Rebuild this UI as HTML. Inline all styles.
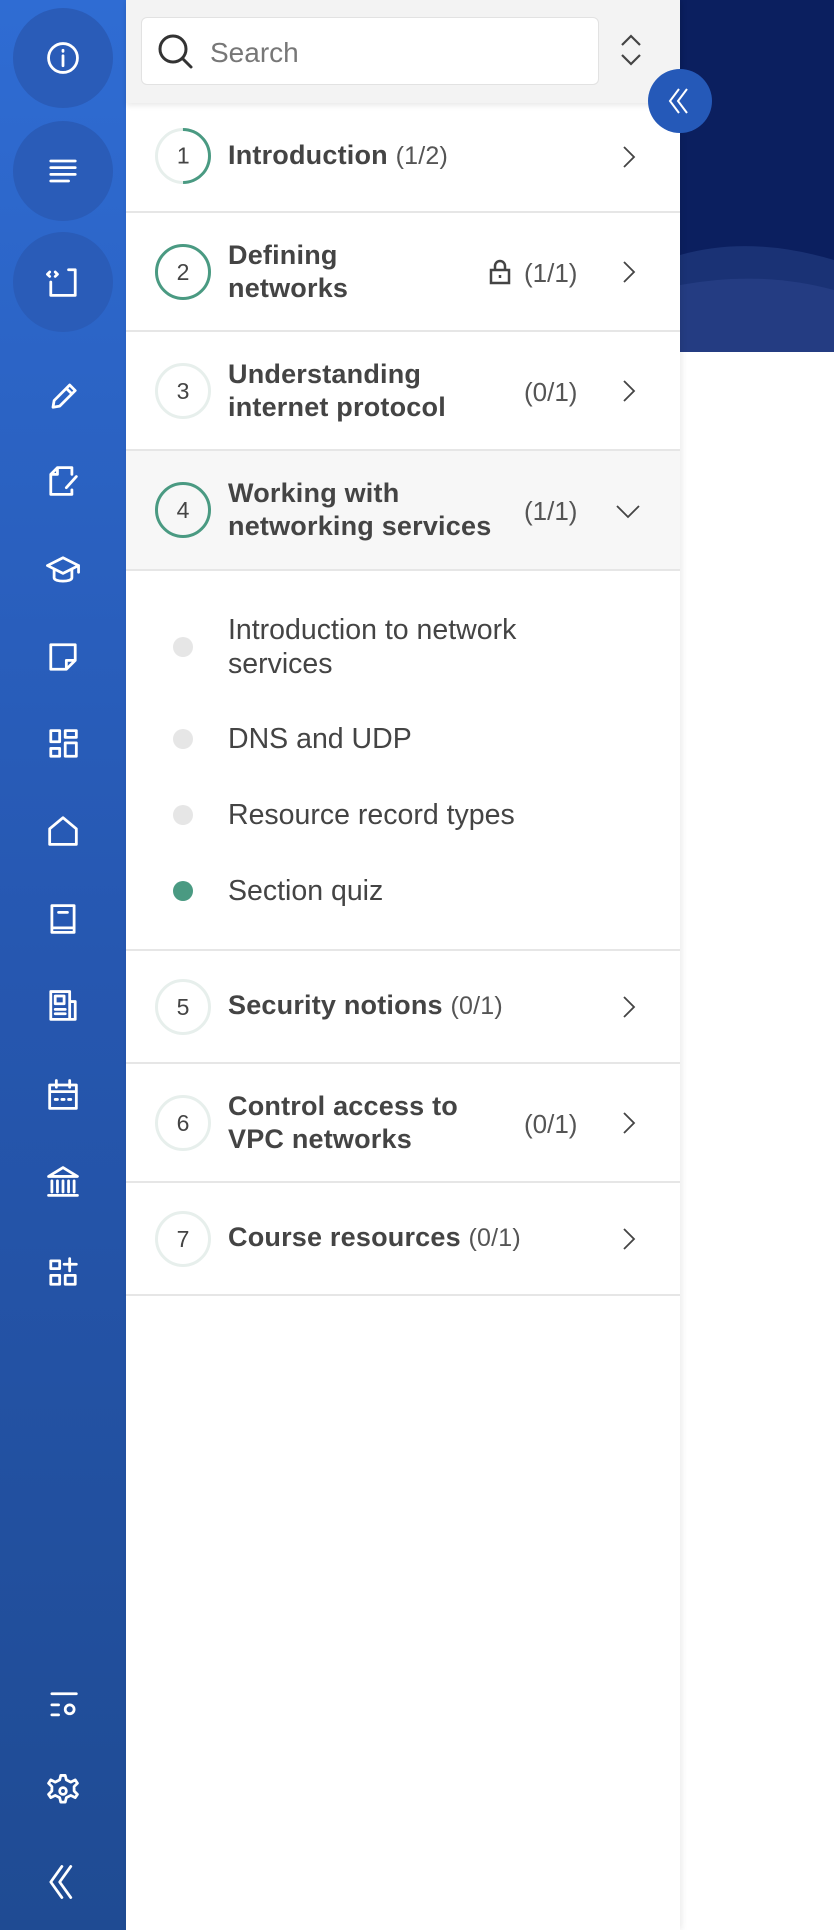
<!DOCTYPE html>
<html><head><meta charset="utf-8"><style>
*{box-sizing:border-box;margin:0;padding:0}
body{width:834px;height:1930px;position:relative;overflow:hidden;background:#fff;font-family:"Liberation Sans",Roboto,sans-serif;color:#3c3c3c}
#side{position:absolute;left:0;top:0;width:126px;height:1930px;background:linear-gradient(#2f6cd3,#2657b0 50%,#1f4b93)}
.ic{position:absolute;left:63px;width:0;height:0}
.ic .bg{position:absolute;left:-50px;top:-50px;width:100px;height:100px;border-radius:50%;background:#2a5cb8}
.ic svg{position:absolute;left:-20px;top:-20px;width:40px;height:40px;fill:none;stroke:#fff;stroke-width:2.5;stroke-linecap:round;stroke-linejoin:round}
#right{position:absolute;left:680px;top:0;width:154px;height:352px;background:#0b1f5f;overflow:hidden}
#panel{position:absolute;left:126px;top:0;width:554px;height:1930px;background:#fff;box-shadow:2px 0 6px rgba(0,0,0,.08)}
#head{position:absolute;left:0;top:0;width:554px;height:103px;background:#f3f3f3;box-shadow:0 3px 5px rgba(0,0,0,.08)}
#search{position:absolute;left:15px;top:17px;width:458px;height:68px;background:#fff;border:1px solid #e2e2e2;border-radius:6px}
#search span{position:absolute;left:68px;top:19px;font-size:28px;color:#777}
.row{position:absolute;left:0;width:554px;border-bottom:2px solid #e6e6e6}
.circ{position:absolute;left:29px;width:56px;height:56px;border-radius:50%;border:3px solid #e7efec;text-align:center;line-height:50px;font-size:23px;color:#444}
.t{position:absolute;left:102px;font-weight:bold;font-size:27px;line-height:33px;color:#444;letter-spacing:.2px}
.t span{font-weight:normal;font-size:25px;color:#555}
.cnt{position:absolute;left:398px;font-size:26px;color:#555}
.chev{position:absolute;left:490px;width:24px;height:24px}
.sub{position:absolute;left:102px;font-size:28.5px;line-height:34px;color:#444}
.dot{position:absolute;left:47px;width:20px;height:20px;border-radius:50%;background:#e6e6e6}
</style></head><body>
<div id="right">
<svg width="154" height="352" viewBox="0 0 154 352"><path d="M0 255 Q70 235 154 260 L154 352 L0 352Z" fill="#1a3275"/><path d="M0 285 Q80 270 154 290 L154 352 L0 352Z" fill="#243c82"/></svg>
</div>
<div id="side">
 <div class="ic" style="top:58px"><div class="bg"></div><svg viewBox="0 0 36 36"><circle cx="18" cy="18" r="13"/><path d="M18 16v9M18 11v1"/></svg></div>
 <div class="ic" style="top:171px"><div class="bg"></div><svg viewBox="0 0 36 36"><path d="M7 9h22M7 15h22M7 21h22M7 27h16"/></svg></div>
 <div class="ic" style="top:282px"><div class="bg"></div><svg viewBox="0 0 36 36"><path d="M7 18v12h22V7h-6M6 9l-2 2 2 2M11 9l2 2-2 2"/></svg></div>
 <div class="ic" style="top:395px"><svg viewBox="0 0 36 36"><path d="M9 29l1-6L24 9l5 5-14 14zM21 12l5 5"/></svg></div>
 <div class="ic" style="top:481px"><svg viewBox="0 0 36 36"><path d="M26 12V6H13L7 12v18h19v-4M7 12h6V6M30 14l-9 10"/></svg></div>
 <div class="ic" style="top:570px"><svg viewBox="0 0 36 36"><path d="M4 14l14-7 14 7-14 7zM10 17v8c0 4 16 4 16 0v-8M32 14v6"/></svg></div>
 <div class="ic" style="top:657px"><svg viewBox="0 0 36 36"><path d="M7 7h22v14l-8 8H7zM29 21h-8v8"/></svg></div>
 <div class="ic" style="top:744px"><svg viewBox="0 0 36 36"><rect x="7" y="6" width="8" height="10"/><rect x="20" y="6" width="10" height="6"/><rect x="7" y="22" width="8" height="7"/><rect x="20" y="17" width="10" height="12"/></svg></div>
 <div class="ic" style="top:831px"><svg viewBox="0 0 36 36"><path d="M6 16L18 6l12 10v14H6z"/></svg></div>
 <div class="ic" style="top:919px"><svg viewBox="0 0 36 36"><path d="M8 6h20v24H8zM8 26h20M14 12h8"/></svg></div>
 <div class="ic" style="top:1006px"><svg viewBox="0 0 36 36"><path d="M7 5h17v25H7zM24 14h5v16h-5M11 9h8v7h-8zM11 21h9M11 25h9"/></svg></div>
 <div class="ic" style="top:1095px"><svg viewBox="0 0 36 36"><path d="M6 9h24v21H6zM6 15h24M12 5v6M24 5v6M11 22h2M17 22h2M23 22h2"/></svg></div>
 <div class="ic" style="top:1182px"><svg viewBox="0 0 36 36"><path d="M5 13L18 5l13 8zM5 30h26M8 17v10M13 17v10M18 17v10M23 17v10M28 17v10"/></svg></div>
 <div class="ic" style="top:1272px"><svg viewBox="0 0 36 36"><rect x="7" y="8" width="8" height="7"/><rect x="7" y="21" width="8" height="8"/><rect x="20" y="21" width="9" height="8"/><path d="M24 6v11M19 11h11"/></svg></div>
 <div class="ic" style="top:1706px"><svg viewBox="0 0 36 36"><path d="M8 7h22M8 17h6M8 26h6"/><circle cx="24" cy="21" r="4"/></svg></div>
 <div class="ic" style="top:1791px"><svg viewBox="0 0 36 36"><path d="M16 4h4l1 4 4 2 4-2 2 3-3 3v4l3 3-2 3-4-2-4 2-1 4h-4l-1-4-4-2-4 2-2-3 3-3v-4l-3-3 2-3 4 2 4-2z"/><circle cx="18" cy="18" r="3"/></svg></div>
 <div class="ic" style="top:1882px"><svg viewBox="0 0 36 36"><path d="M17 4L7 18l10 14M25 4L15 18l10 14"/></svg></div>
</div>
<div id="panel">
 <div id="head">
  <div id="search"><svg style="position:absolute;left:14px;top:14px" width="40" height="40" viewBox="0 0 40 40" fill="none" stroke="#333" stroke-width="3" stroke-linecap="round"><circle cx="17" cy="17" r="13"/><path d="M27 27l8 8"/></svg><span>Search</span></div>
  <svg style="position:absolute;left:490px;top:32px" width="30" height="36" viewBox="0 0 30 36" fill="none" stroke="#444" stroke-width="2.2"><path d="M6 13l9-9 9 9M6 23l9 9 9-9"/></svg>
 </div>
 <div class="row" style="top:103px;height:110px"><div class="circ" style="top:25px;border-color:#e7efec;border-right-color:#4a9a82;border-bottom-color:#4a9a82;transform:rotate(-45deg)"><span style="display:inline-block;transform:rotate(45deg)">1</span></div><div class="t" style="top:36px">Introduction <span>(1/2)</span></div><svg class="chev" style="top:42px" viewBox="0 0 24 24" fill="none" stroke="#444" stroke-width="1.8"><path d="M8 2l10 10-10 10"/></svg></div>
 <div class="row" style="top:213px;height:119px"><div class="circ" style="top:31px;border-color:#4a9a82">2</div><div class="t" style="top:26px">Defining<br>networks</div><svg style="position:absolute;left:362px;top:46px" width="24" height="26" viewBox="0 0 24 26" fill="none" stroke="#444" stroke-width="2.5"><rect x="3" y="11" width="18" height="13" fill="none"/><path d="M7 11V7a5 5 0 0110 0v4"/><path d="M12 16v3"/></svg><div class="cnt" style="top:45px">(1/1)</div><svg class="chev" style="top:47px" viewBox="0 0 24 24" fill="none" stroke="#444" stroke-width="1.8"><path d="M8 2l10 10-10 10"/></svg></div>
 <div class="row" style="top:332px;height:119px"><div class="circ" style="top:31px">3</div><div class="t" style="top:26px">Understanding<br>internet protocol</div><div class="cnt" style="top:45px">(0/1)</div><svg class="chev" style="top:47px" viewBox="0 0 24 24" fill="none" stroke="#444" stroke-width="1.8"><path d="M8 2l10 10-10 10"/></svg></div>
 <div class="row" style="top:451px;height:120px;background:#f7f7f7"><div class="circ" style="top:31px;border-color:#4a9a82">4</div><div class="t" style="top:26px">Working with<br>networking services</div><div class="cnt" style="top:45px">(1/1)</div><svg class="chev" style="top:48px" viewBox="0 0 24 24" fill="none" stroke="#444" stroke-width="1.8"><path d="M1 7l11 11 11-11"/></svg></div>
 <div class="row" style="top:571px;height:380px">
  <div class="dot" style="top:66px"></div><div class="sub" style="top:42px">Introduction to network<br>services</div>
  <div class="dot" style="top:158px"></div><div class="sub" style="top:151px">DNS and UDP</div>
  <div class="dot" style="top:234px"></div><div class="sub" style="top:227px">Resource record types</div>
  <div class="dot" style="top:310px;background:#4a9a82"></div><div class="sub" style="top:303px">Section quiz</div>
 </div>
 <div class="row" style="top:951px;height:113px"><div class="circ" style="top:28px">5</div><div class="t" style="top:38px">Security notions <span>(0/1)</span></div><svg class="chev" style="top:44px" viewBox="0 0 24 24" fill="none" stroke="#444" stroke-width="1.8"><path d="M8 2l10 10-10 10"/></svg></div>
 <div class="row" style="top:1064px;height:119px"><div class="circ" style="top:31px">6</div><div class="t" style="top:26px">Control access to<br>VPC networks</div><div class="cnt" style="top:45px">(0/1)</div><svg class="chev" style="top:47px" viewBox="0 0 24 24" fill="none" stroke="#444" stroke-width="1.8"><path d="M8 2l10 10-10 10"/></svg></div>
 <div class="row" style="top:1183px;height:113px"><div class="circ" style="top:28px">7</div><div class="t" style="top:38px">Course resources <span>(0/1)</span></div><svg class="chev" style="top:44px" viewBox="0 0 24 24" fill="none" stroke="#444" stroke-width="1.8"><path d="M8 2l10 10-10 10"/></svg></div>
</div>
<div style="position:absolute;left:648px;top:69px;width:64px;height:64px;border-radius:50%;background:#2559b8"><svg style="position:absolute;left:14px;top:14px" width="36" height="36" viewBox="0 0 36 36" fill="none" stroke="#fff" stroke-width="2"><path d="M17 6L8 18l9 12M25 6l-9 12 9 12"/></svg></div>
</body></html>
